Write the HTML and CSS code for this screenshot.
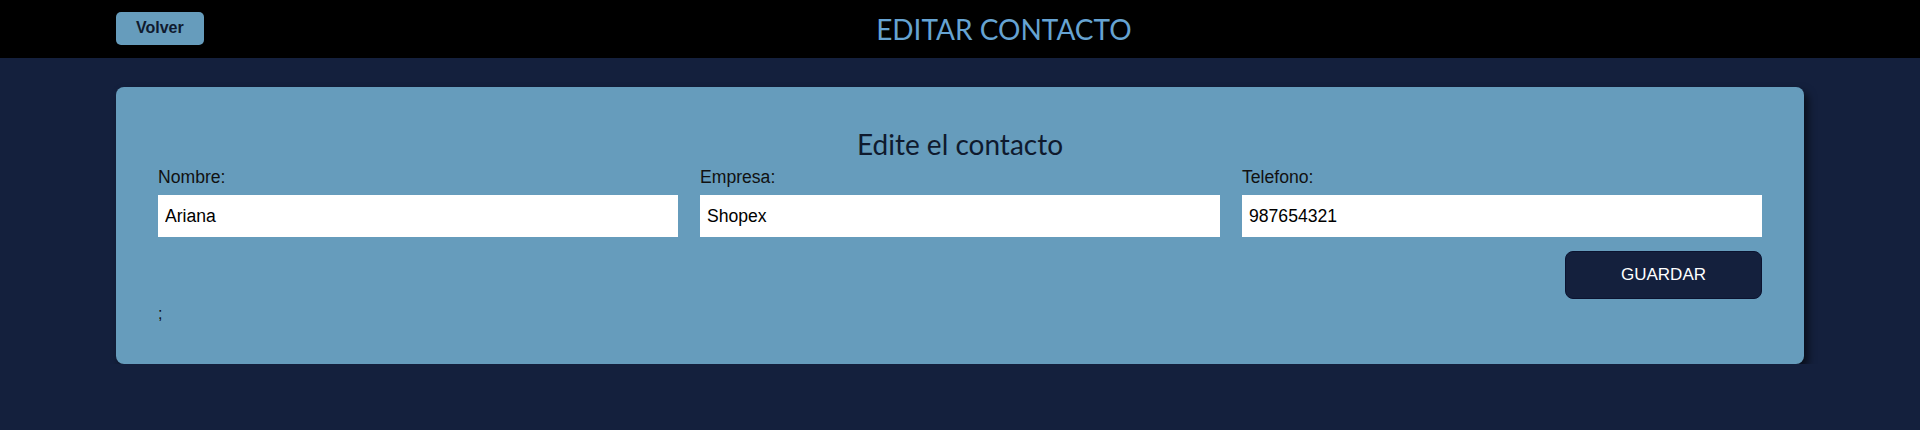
FILE: index.html
```html
<!DOCTYPE html>
<html lang="es">
<head>
  <meta charset="UTF-8" />
  <meta name="viewport" content="width=device-width, initial-scale=1" />
  <title>Editar contacto</title>
  <link rel="stylesheet" href="styles.css">
</head>
<body>
  <div class="header">
    <div class="header-inner">
      <button class="btn-back">Volver</button>
      <h1>EDITAR CONTACTO</h1>
    </div>
  </div>

  <div class="container">
    <form class="card">
      <h2>Edite el contacto</h2>
      <div class="fields">
        <div class="field">
          <label for="nombre">Nombre:</label>
          <input id="nombre" type="text" value="Ariana">
        </div>
        <div class="field">
          <label for="empresa">Empresa:</label>
          <input id="empresa" type="text" value="Shopex">
        </div>
        <div class="field">
          <label for="telefono">Telefono:</label>
          <input id="telefono" type="text" value="987654321">
        </div>
      </div>
      <div class="actions">
        <button type="button" class="btn-save">GUARDAR</button>
      </div>
      <p class="note">;</p>
    </form>
  </div>
</body>
</html>
```

FILE: styles.css
```css
body { margin: 0; padding: 0; background: #14203d; font-family: "Liberation Sans", Arial, sans-serif; color: #0f1a2e; }

.header { background: #000; height: 58px; }
.header-inner { margin: 0 116px; height: 58px; display: flex; align-items: center; }
.header h1 { flex: 1; margin: 0; text-align: center; font-family: "Lato", sans-serif; font-weight: 400; font-size: 28px; color: #66a3d2; }
.btn-back { height: 33px; margin-bottom: 2px; padding: 0 20px; border: none; border-radius: 5px; background: #669cbc; color: #0f1a2e; font-family: "Liberation Sans", Arial, sans-serif; font-weight: bold; font-size: 16px; }

.container { margin: 29px 116px 0; }
.card { display: flex; flex-direction: column; background: #669cbc; border-radius: 8px; padding: 40px 42px 41px; box-shadow: 4px 5px 9px rgba(0,0,0,0.6); }
.card h2 { margin: 0; text-align: center; font-family: "Lato", sans-serif; font-weight: 400; font-size: 28px; line-height: 34px; color: #0f1a2e; }

.fields { display: grid; grid-template-columns: repeat(3, 1fr); gap: 22px; margin-top: 6px; }
.field { display: flex; flex-direction: column; }
.field label { font-size: 17.6px; line-height: 20px; color: #111; margin-bottom: 8px; }
.field input { height: 42px; box-sizing: border-box; border: none; padding: 0 7px; font-family: "Liberation Sans", Arial, sans-serif; font-size: 17.6px; color: #000; background: #fff; outline: none; }

.actions { display: flex; justify-content: flex-end; margin-top: 14px; }
.btn-save { width: 197px; height: 48px; background: #14203d; color: #fff; border: 1px solid #0b1330; border-radius: 8px; font-family: "Liberation Sans", Arial, sans-serif; font-size: 17px; }

.note { margin: 6px 0 0; font-size: 16px; line-height: 18px; color: #111; }
```
